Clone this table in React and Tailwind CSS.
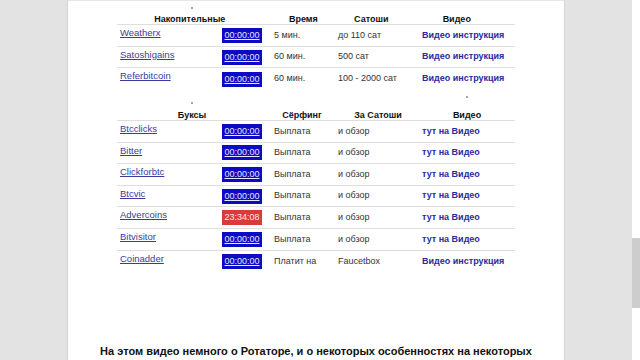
import React from 'react';

const font = { fontFamily: '"Liberation Sans", Arial, sans-serif' };

const top = [
  { name: 'Weatherx', time: '5 мин.', sat: 'до 110 сат', video: 'Видео инструкция' },
  { name: 'Satoshigains', time: '60 мин.', sat: '500 сат', video: 'Видео инструкция' },
  { name: 'Referbitcoin', time: '60 мин.', sat: '100 - 2000 сат', video: 'Видео инструкция' },
];

const bux = [
  { name: 'Btcclicks', time: 'Выплата', sat: 'и обзор', video: 'тут на Видео' },
  { name: 'Bitter', time: 'Выплата', sat: 'и обзор', video: 'тут на Видео' },
  { name: 'Clickforbtc', time: 'Выплата', sat: 'и обзор', video: 'тут на Видео' },
  { name: 'Btcvic', time: 'Выплата', sat: 'и обзор', video: 'тут на Видео' },
  { name: 'Advercoins', time: 'Выплата', sat: 'и обзор', video: 'тут на Видео', red: '23:34:08' },
  { name: 'Bitvisitor', time: 'Выплата', sat: 'и обзор', video: 'тут на Видео' },
  { name: 'Coinadder', time: 'Платит на', sat: 'Faucetbox', video: 'Видео инструкция' },
];

function Timer({ red }) {
  if (red) {
    return (
      <div className="w-[40px] h-[15px] bg-[#d93a3a] text-[#fbe9e9] text-[9px] leading-[15px] text-center">
        {red}
      </div>
    );
  }
  return (
    <div className="w-[40px] h-[15px] bg-[#0b0bc4] text-[#e6e6ff] text-[9px] leading-[15px] text-center underline">
      00:00:00
    </div>
  );
}

function Row({ item, last, h }) {
  return (
    <div className={`flex items-center ${h} ${last ? '' : 'border-b border-[#dedede]'}`}>
      <div className="w-[105px] self-start pt-[2px] pl-[3px] text-[9.5px] leading-[12px] text-[#3b3b9e] underline">
        {item.name}
      </div>
      <Timer red={item.red} />
      <div className="w-[64px] ml-[12px] text-[9px] text-[#333]">{item.time}</div>
      <div className="w-[84px] text-[9px] text-[#333]">{item.sat}</div>
      <div className="text-[9px] font-bold text-[#2a2a9c]">{item.video}</div>
    </div>
  );
}

function Header({ cols }) {
  return (
    <div className="flex h-[14px] pt-[3px] leading-[10px] border-b border-[#dedede] text-[9px] font-bold text-[#111]">
      {cols.map((c) => (
        <div key={c.t} className={`${c.w} text-center`}>{c.t}</div>
      ))}
    </div>
  );
}

function Dot({ ml }) {
  return <div className={`w-[2px] h-[2px] bg-[#888] rounded-full ${ml}`}></div>;
}

function App() {
  return (
    <div className="flex w-[640px] h-[360px] overflow-hidden bg-[#e3e3e3]" style={font}>
      <div className="w-[68px] border-r border-[#d2d2d2]"></div>
      <main className="w-[496px] bg-white flex flex-col border-t border-[#e6e6e6]">
        <div className="ml-[49px] w-[398px]">
          <div className="h-[10px] pt-[6px]">
            <Dot ml="ml-[74px]" />
          </div>
          <Header
            cols={[
              { t: 'Накопительные', w: 'w-[150px]' },
              { t: 'Время', w: 'w-[84px]' },
              { t: 'Сатоши', w: 'w-[56px]' },
              { t: 'Видео', w: 'w-[120px]' },
            ]}
          />
          {top.map((it, i) => (
            <Row key={it.name} item={it} last={i === top.length - 1} h="h-[21.7px]" />
          ))}
          <div className="h-[17px] flex flex-col">
            <Dot ml="ml-[349px] mt-[6px]" />
            <Dot ml="ml-[74px] mt-[4px]" />
          </div>
          <Header
            cols={[
              { t: 'Буксы', w: 'w-[150px]' },
              { t: 'Сёрфинг', w: 'w-[70px]' },
              { t: 'За Сатоши', w: 'w-[82px]' },
              { t: 'Видео', w: 'w-[96px]' },
            ]}
          />
          {bux.map((it, i) => (
            <Row key={it.name} item={it} last={i === bux.length - 1} h="h-[21.6px]" />
          ))}
        </div>
        <div className="mt-auto mb-[2px] text-center text-[11px] font-bold text-[#111] leading-[14px]">
          На этом видео немного о Ротаторе, и о некоторых особенностях на некоторых
        </div>
      </main>
      <div className="w-[68px] border-l border-[#d6d6d6]"></div>
      <div className="w-[8px] bg-white flex flex-col">
        <div className="h-[238px]"></div>
        <div className="h-[70px] bg-[#cdcdcd]"></div>
      </div>
    </div>
  );
}

export default App;
